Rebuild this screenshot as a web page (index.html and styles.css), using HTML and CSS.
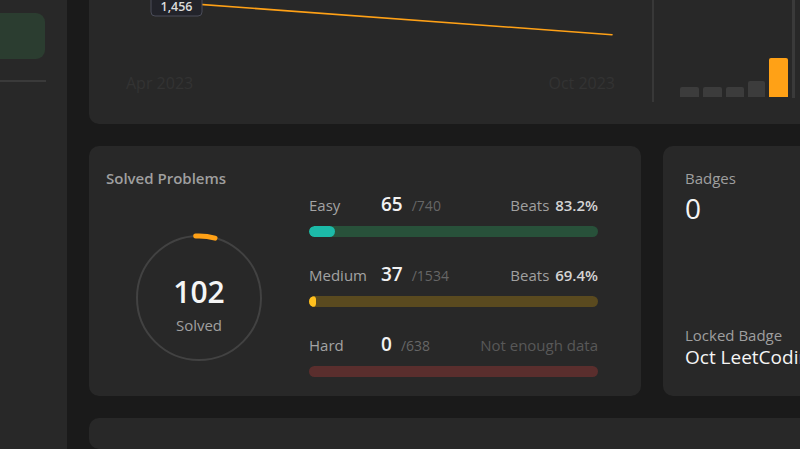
FILE: index.html
```html
<!DOCTYPE html>
<html lang="en">
<head>
<meta charset="utf-8">
<title>Profile</title>
<link rel="stylesheet" href="styles.css">
</head>
<body>
<div class="layout">
  <aside class="sidebar">
    <div class="side-button"></div>
    <div class="side-divider"></div>
  </aside>
  <main class="main">
    <section class="card chart-card">
      <svg class="line-chart" width="563" height="124" viewBox="0 0 563 124">
        <line x1="87" y1="2.6" x2="523" y2="34.7" stroke="#ffa116" stroke-width="1.6" stroke-linecap="round"/>
        <rect x="62" y="-10" width="51" height="26" rx="4" fill="#22232a" stroke="#4a4c58" stroke-width="1"/>
        <text x="87.5" y="10.5" class="tip-text" text-anchor="middle">1,456</text>
        <text x="37" y="89" class="axis-text">Apr 2023</text>
        <text x="526" y="89" class="axis-text" text-anchor="end">Oct 2023</text>
      </svg>
      <div class="v-divider"></div>
      <div class="bars">
        <div class="bar b1"></div>
        <div class="bar b2"></div>
        <div class="bar b3"></div>
        <div class="bar b4"></div>
        <div class="bar bar-hot"></div>
        <div class="bar-edge"></div>
      </div>
    </section>

    <div class="row">
      <section class="card solved-card">
        <div class="solved-left">
          <h2 class="card-title">Solved Problems</h2>
          <div class="ring">
            <svg width="130" height="130" viewBox="0 0 130 130">
              <circle cx="65" cy="65" r="62" fill="none" stroke="#424242" stroke-width="2"/>
              <path d="M61.7 3.1 A62 62 0 0 1 81.0 5.1" fill="none" stroke="#ffa116" stroke-width="5" stroke-linecap="round"/>
            </svg>
            <div class="ring-label">
              <div class="ring-count">102</div>
              <div class="ring-sub">Solved</div>
            </div>
          </div>
        </div>
        <div class="solved-right">
          <div class="diff">
            <div class="diff-head">
              <span class="diff-name">Easy</span>
              <span class="diff-count">65</span>
              <span class="diff-total">/740</span>
              <span class="diff-beats">Beats <b>83.2%</b></span>
            </div>
            <div class="track track-easy"><div class="fill fill-easy" style="width:26px"></div></div>
          </div>
          <div class="diff">
            <div class="diff-head">
              <span class="diff-name">Medium</span>
              <span class="diff-count">37</span>
              <span class="diff-total">/1534</span>
              <span class="diff-beats">Beats <b>69.4%</b></span>
            </div>
            <div class="track track-medium"><div class="fill fill-medium" style="width:7px"></div></div>
          </div>
          <div class="diff">
            <div class="diff-head">
              <span class="diff-name">Hard</span>
              <span class="diff-count">0</span>
              <span class="diff-total">/638</span>
              <span class="diff-beats muted">Not enough data</span>
            </div>
            <div class="track track-hard"></div>
          </div>
        </div>
      </section>

      <section class="card badge-card">
        <div class="badge-top">
          <div class="badge-label">Badges</div>
          <div class="badge-count">0</div>
        </div>
        <div class="badge-bottom">
          <div class="badge-label">Locked Badge</div>
          <div class="badge-name">Oct LeetCoding Challenge</div>
        </div>
      </section>
    </div>

    <section class="card bottom-card"></section>
  </main>
</div>
</body>
</html>
```

FILE: styles.css
```css
html, body {
  margin: 0;
  padding: 0;
  background: #1a1a1a;
  overflow: hidden;
  height: 449px;
}

body {
  font-family: "Open Sans", "Noto Sans", sans-serif;
  color: #eaeaea;
}

.layout {
  display: flex;
  width: 1100px;
  height: 449px;
}

.sidebar {
  width: 67px;
  flex: none;
  background: #282828;
  box-sizing: border-box;
  padding-top: 13px;
}

.side-button {
  width: 45px;
  height: 46px;
  background: #2b3d30;
  border-radius: 0 9px 9px 0;
}

.side-divider {
  width: 46px;
  height: 2px;
  background: #3a3a3a;
  margin-top: 21px;
}

.main {
  padding-left: 22px;
  display: flex;
  flex-direction: column;
  gap: 22px;
  flex: 1;
}

.card {
  background: #282828;
  border-radius: 10px;
}

/* top chart card */
.chart-card {
  height: 124px;
  border-radius: 0 0 10px 10px;
  display: flex;
  align-items: flex-start;
}

.line-chart {
  display: block;
  flex: none;
  overflow: visible;
}

.tip-text {
  font-family: "Open Sans", sans-serif;
  font-size: 12.5px;
  font-weight: 600;
  fill: #dcdcdc;
}

.axis-text {
  font-family: "Open Sans", sans-serif;
  font-size: 16px;
  fill: #333333;
}

.v-divider {
  width: 2px;
  height: 102px;
  background: #383838;
  flex: none;
}

.bars {
  display: flex;
  align-items: flex-end;
  gap: 4px;
  height: 98px;
  padding-left: 26px;
}

.bar {
  background: #3c3c3c;
  border-radius: 2px 2px 0 0;
  height: 10px;
  width: 19px;
  margin-bottom: 1px;
}

.b3 { width: 18px; }
.b4 { width: 17px; height: 16px; }

.bar-hot {
  background: #ffa116;
  height: 39px;
  width: 19px;
}

.bar-edge {
  width: 3px;
  height: 98px;
  background: #3a3a3a;
}

/* second row */
.row {
  display: flex;
  gap: 22px;
}

.solved-card {
  width: 552px;
  height: 250px;
  box-sizing: border-box;
  padding: 23px 43px 0 17px;
  display: flex;
  gap: 17px;
  flex: none;
}

.solved-left {
  width: 186px;
  flex: none;
}

.card-title {
  margin: 0;
  font-size: 15px;
  line-height: 18px;
  font-weight: 600;
  color: #9f9f9f;
}

.ring {
  position: relative;
  width: 130px;
  height: 130px;
  margin: 46px auto 0;
}

.ring svg {
  display: block;
}

.ring-label {
  position: absolute;
  inset: 0;
  display: flex;
  flex-direction: column;
  align-items: center;
  justify-content: center;
  padding-top: 14px;
}

.ring-count {
  font-size: 30px;
  font-weight: 600;
  line-height: 34px;
  color: #f5f5f5;
}

.ring-sub {
  font-size: 15px;
  line-height: 20px;
  margin-top: 6px;
  color: #a0a0a0;
}

.solved-right {
  flex: 1;
  padding-top: 23px;
  display: flex;
  flex-direction: column;
  gap: 25px;
}

.diff-head {
  display: flex;
  align-items: baseline;
  height: 24px;
  line-height: 24px;
}

.diff-name {
  width: 72px;
  font-size: 15px;
  color: #a3a3a3;
  flex: none;
}

.diff-count {
  font-size: 19px;
  font-weight: 600;
  color: #f2f2f2;
}

.diff-total {
  font-size: 14px;
  color: #666;
  margin-left: 9px;
}

.diff-beats {
  margin-left: auto;
  font-size: 15px;
  color: #a0a0a0;
}

.diff-beats b {
  font-weight: 600;
  color: #d4d4d4;
  margin-left: 2px;
}

.diff-beats.muted {
  color: #585858;
}

.track {
  height: 11px;
  border-radius: 6px;
  margin-top: 10px;
  overflow: hidden;
}

.track-easy { background: #28513a; }
.track-medium { background: #5a4a1f; }
.track-hard { background: #5a2e2d; }

.fill {
  height: 100%;
  border-radius: 6px;
}

.fill-easy { background: #1cbaa8; }
.fill-medium { background: #ffc01e; }

/* badges */
.badge-card {
  width: 320px;
  height: 250px;
  box-sizing: border-box;
  padding: 23px 22px 26px;
  flex: none;
  display: flex;
  flex-direction: column;
  justify-content: space-between;
}

.badge-label {
  font-size: 15px;
  line-height: 18px;
  color: #9f9f9f;
}

.badge-count {
  font-size: 28px;
  line-height: 34px;
  margin-top: 4px;
  color: #f5f5f5;
}

.badge-name {
  font-size: 19px;
  line-height: 26px;
  color: #f5f5f5;
  white-space: nowrap;
}

.bottom-card {
  height: 200px;
  border-radius: 10px;
}
```
